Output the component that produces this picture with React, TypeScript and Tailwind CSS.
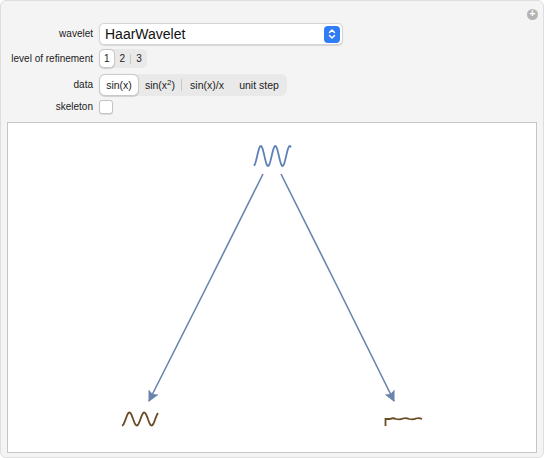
import { useState } from "react";

const LABEL = "text-[10px] text-[#1a1a1a] text-right leading-none";

function sinePath(x0: number, x1: number, yMid: number, amp: number, period: number, phase: number) {
  const pts: string[] = [];
  for (let x = x0; x <= x1; x += 0.5) {
    const y = yMid - amp * Math.sin(((x - x0) / period) * Math.PI * 2 + phase);
    pts.push(`${x.toFixed(1)},${y.toFixed(1)}`);
  }
  return "M" + pts.join(" L");
}

export default function App() {
  const [level, setLevel] = useState(1);
  const [data, setData] = useState("sin(x)");
  const [skeleton, setSkeleton] = useState(false);

  return (
    <div className="w-[544px] h-[458px] bg-[#f4f4f4] border border-[#dedede] rounded-[6px] relative overflow-hidden" style={{ fontFamily: '"Liberation Sans", Arial, sans-serif' }}>
      <div className="absolute right-[5px] top-[8px] w-[11px] h-[11px] rounded-full bg-[#b4b4b4] flex items-center justify-center">
        <span className="text-white text-[10px] font-bold leading-none -mt-[1px]">+</span>
      </div>

      <div className="grid grid-cols-[92px_1fr] gap-x-[6px] items-center pt-[22px]">
        <div className={LABEL}>wavelet</div>
        <div className="w-[244px] h-[22px] bg-white rounded-[5px] border border-[#d6d6d6] shadow-[0_0.5px_1px_rgba(0,0,0,0.12)] flex items-center justify-between pl-[5px] pr-[2px]">
          <span className="text-[14px] text-[#111]">HaarWavelet</span>
          <div className="w-[16px] h-[17px] rounded-[4px] bg-[#2f7cf6] flex items-center justify-center">
            <svg width="8" height="12" viewBox="0 0 8 12" fill="none" stroke="white" strokeWidth="1.5" strokeLinecap="round" strokeLinejoin="round">
              <path d="M1.5 4.5 L4 2 L6.5 4.5" />
              <path d="M1.5 7.5 L4 10 L6.5 7.5" />
            </svg>
          </div>
        </div>

        <div className={LABEL + " mt-[4px] whitespace-nowrap"}>level of refinement</div>
        <div className="mt-[4px] flex">
          <div className="h-[19px] bg-[#e9e9e9] rounded-[5px] flex items-center text-[10px] text-[#222]">
            {[1, 2, 3].map((n, i) => (
              <div key={n} className="flex items-center h-full">
                {i > 0 && level !== n && level !== n - 1 && <div className="w-px h-[10px] bg-[#c8c8c8]" />}
                <button
                  onClick={() => setLevel(n)}
                  className={
                    "h-full px-[4px] rounded-[5px] leading-none " +
                    (level === n ? "bg-white border border-[#c9c9c9] shadow-[0_0.5px_1px_rgba(0,0,0,0.15)]" : "border border-transparent")
                  }
                >
                  {n}
                </button>
              </div>
            ))}
          </div>
        </div>

        <div className={LABEL + " mt-[6px]"}>data</div>
        <div className="mt-[6px] flex">
          <div className="h-[22px] w-[188px] bg-[#e9e9e9] rounded-[6px] flex items-center text-[10.5px] text-[#222]">
            {[
              { k: "sin(x)", el: <>sin(x)</>, w: "w-[40px]" },
              { k: "sin(x2)", el: <>sin(x<sup className="text-[8px] -top-[4px]">2</sup>)</>, w: "w-[42px]" },
              { k: "sin(x)/x", el: <>sin(x)/x</>, w: "w-[50px]" },
              { k: "unit step", el: <>unit step</>, w: "w-[54px]" },
            ].map((o, i, arr) => (
              <div key={o.k} className="flex items-center h-full">
                {i === 2 && data !== arr[1].k && data !== arr[2].k && <div className="w-px h-[12px] bg-[#c8c8c8]" />}
                <button
                  onClick={() => setData(o.k)}
                  className={
                    o.w + " h-full rounded-[6px] leading-none whitespace-nowrap " +
                    (data === o.k ? "bg-white border border-[#c9c9c9] shadow-[0_0.5px_1px_rgba(0,0,0,0.15)]" : "border border-transparent")
                  }
                >
                  {o.el}
                </button>
              </div>
            ))}
          </div>
        </div>

        <div className={LABEL + " mt-[4px]"}>skeleton</div>
        <div className="mt-[4px] flex">
          <button
            onClick={() => setSkeleton(!skeleton)}
            className="w-[14px] h-[14px] bg-white rounded-[3px] border border-[#c4c4c4] shadow-[0_0.5px_1px_rgba(0,0,0,0.1)]"
          />
        </div>
      </div>

      <div className="mx-[6px] mt-[8px] h-[331px] bg-white border border-[#c6c6c6]">
        <svg width="529" height="329" viewBox="7 122 529 329" className="block">
          <defs>
            <marker id="ah" viewBox="0 0 10 10" refX="9" refY="5" markerWidth="7" markerHeight="7" orient="auto-start-reverse">
              <path d="M0 0 L10 5 L0 10 L2 5 Z" fill="#6a84ad" />
            </marker>
          </defs>
          <path d={sinePath(253, 290, 155, 10, 14.5, -Math.PI / 2 + 0.2)} stroke="#5d80b8" strokeWidth="1.8" fill="none" />
          <path d="M262 173 L205 287 L148 400" stroke="#6a84ad" strokeWidth="1.6" fill="none" markerEnd="url(#ah)" />
          <path d="M280 173 L337 287 L393 400" stroke="#6a84ad" strokeWidth="1.6" fill="none" markerEnd="url(#ah)" />
          <path d={sinePath(121, 157, 418, 6.5, 14.8, -Math.PI / 2)} stroke="#6b4a26" strokeWidth="1.8" fill="none" />
          <path d="M384.5 425 L384.5 418 L389 418 Q392 416.5 395 418 Q399 419 402 417.5 Q405 416.5 408 418 Q412 419 415 417.5 Q418 416.5 421 418" stroke="#6b4a26" strokeWidth="1.8" fill="none" />
        </svg>
      </div>
    </div>
  );
}
